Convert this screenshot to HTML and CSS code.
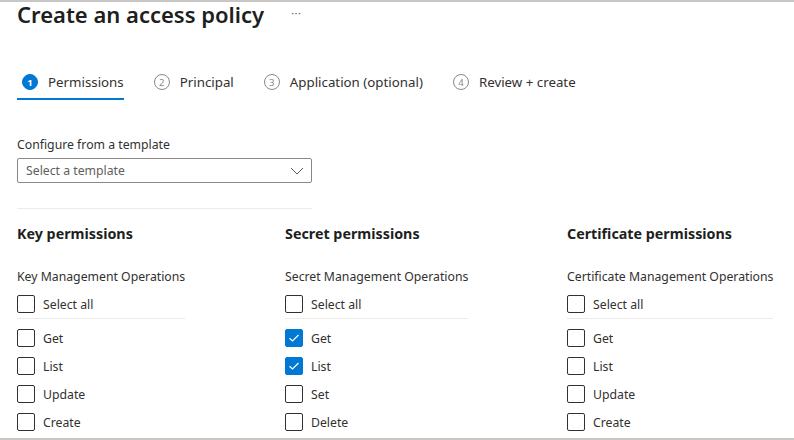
FILE: index.html
```html
<!DOCTYPE html>
<html lang="en">
<head>
<meta charset="utf-8">
<title>Create an access policy</title>
<link rel="stylesheet" href="styles.css">
</head>
<body>
<div class="frame">
  <header class="title-row">
    <h1 class="title">Create an access policy</h1>
    <span class="more">···</span>
  </header>

  <nav class="steps">
    <div class="step active"><span class="num">1</span><span class="label">Permissions</span></div>
    <div class="step"><span class="num">2</span><span class="label">Principal</span></div>
    <div class="step"><span class="num">3</span><span class="label">Application (optional)</span></div>
    <div class="step"><span class="num">4</span><span class="label">Review + create</span></div>
  </nav>

  <section class="template">
    <label class="field-label">Configure from a template</label>
    <div class="select">
      <span>Select a template</span>
      <svg class="chev" width="14" height="8" viewBox="0 0 14 8"><path d="M1 1 L7 7 L13 1" fill="none" stroke="#605e5c" stroke-width="1"/></svg>
    </div>
    <div class="divider"></div>
  </section>

  <section class="perms">
    <div class="col">
      <h2 class="col-title">Key permissions</h2>
      <div class="group-label">Key Management Operations</div>
      <div class="cb all"><span class="box"></span><span>Select all</span></div>
      <div class="cb"><span class="box"></span><span>Get</span></div>
      <div class="cb"><span class="box"></span><span>List</span></div>
      <div class="cb"><span class="box"></span><span>Update</span></div>
      <div class="cb"><span class="box"></span><span>Create</span></div>
    </div>
    <div class="col">
      <h2 class="col-title">Secret permissions</h2>
      <div class="group-label">Secret Management Operations</div>
      <div class="cb all"><span class="box"></span><span>Select all</span></div>
      <div class="cb"><span class="box checked"><svg width="12" height="10" viewBox="0 0 12 10"><path d="M1.5 5.2 L4.5 8 L10.5 2" fill="none" stroke="#fff" stroke-width="1.2"/></svg></span><span>Get</span></div>
      <div class="cb"><span class="box checked"><svg width="12" height="10" viewBox="0 0 12 10"><path d="M1.5 5.2 L4.5 8 L10.5 2" fill="none" stroke="#fff" stroke-width="1.2"/></svg></span><span>List</span></div>
      <div class="cb"><span class="box"></span><span>Set</span></div>
      <div class="cb"><span class="box"></span><span>Delete</span></div>
    </div>
    <div class="col">
      <h2 class="col-title">Certificate permissions</h2>
      <div class="group-label">Certificate Management Operations</div>
      <div class="cb all"><span class="box"></span><span>Select all</span></div>
      <div class="cb"><span class="box"></span><span>Get</span></div>
      <div class="cb"><span class="box"></span><span>List</span></div>
      <div class="cb"><span class="box"></span><span>Update</span></div>
      <div class="cb"><span class="box"></span><span>Create</span></div>
    </div>
  </section>
</div>
</body>
</html>
```

FILE: styles.css
```css
* { box-sizing: border-box; }
html, body { margin: 0; padding: 0; background: #fff; }
body {
  font-family: "Noto Sans", "Open Sans", sans-serif;
  color: #323130;
  width: 794px;
  height: 440px;
  overflow: hidden;
}
.frame {
  height: 440px;
  border-top: 2px solid #c8c6c4;
  border-bottom: 2px solid #c8c6c4;
  padding: 0 17px;
  overflow: hidden;
}
.title-row {
  display: flex;
  align-items: center;
  height: 24px;
  gap: 27px;
}
.title {
  margin: 0;
  font-size: 22px;
  font-weight: 600;
  line-height: 30px;
  color: #201f1e;
  white-space: nowrap;
}
.more {
  font-size: 11px;
  color: #605e5c;
  letter-spacing: 0.5px;
  margin-top: -4px;
}
.steps {
  display: flex;
  margin-top: 40px;
  gap: 25px;
}
.step {
  display: flex;
  align-items: center;
  gap: 10px;
  height: 34px;
  font-size: 13.3px;
  color: #323130;
  border-bottom: 2px solid transparent;
  white-space: nowrap;
}
.step .num {
  width: 16px;
  height: 16px;
  border-radius: 50%;
  border: 1px solid #8a8886;
  color: #8a8886;
  font-size: 9.5px;
  display: flex;
  align-items: center;
  justify-content: center;
  margin-left: 5px;
  flex: none;
}
.step.active .num {
  background: #0078d4;
  border-color: #0078d4;
  color: #fff;
  font-weight: 700;
}
.step.active { border-bottom-color: #0078d4; }
.template { margin-top: 36px; width: 295px; }
.field-label {
  display: block;
  font-size: 12.25px;
  line-height: 18px;
  white-space: nowrap;
}
.select {
  margin-top: 4px;
  height: 25px;
  border: 1px solid #8a8886;
  border-radius: 2px;
  display: flex;
  align-items: center;
  justify-content: space-between;
  padding: 0 7px 0 8px;
  font-size: 12.25px;
  color: #605e5c;
}
.divider {
  margin-top: 25px;
  height: 1px;
  background: #edebe9;
}
.perms {
  display: grid;
  grid-template-columns: 268px 282px 1fr;
  margin-top: 15px;
}
.col {
  display: flex;
  flex-direction: column;
  justify-self: start;
  white-space: nowrap;
}
.col-title {
  margin: 0;
  font-size: 14.3px;
  font-weight: 700;
  line-height: 20px;
  color: #201f1e;
}
.group-label {
  margin-top: 24px;
  font-size: 12.25px;
  line-height: 18px;
}
.cb {
  display: flex;
  align-items: center;
  gap: 8px;
  height: 28px;
  font-size: 12.25px;
}
.cb.all {
  margin-top: 4px;
  height: 29px;
  border-bottom: 1px solid #edebe9;
  margin-bottom: 5px;
}
.box {
  width: 18px;
  height: 18px;
  border: 1px solid #323130;
  border-radius: 2px;
  display: flex;
  align-items: center;
  justify-content: center;
  flex: none;
}
.box.checked { background: #0078d4; border-color: #0078d4; }
```
